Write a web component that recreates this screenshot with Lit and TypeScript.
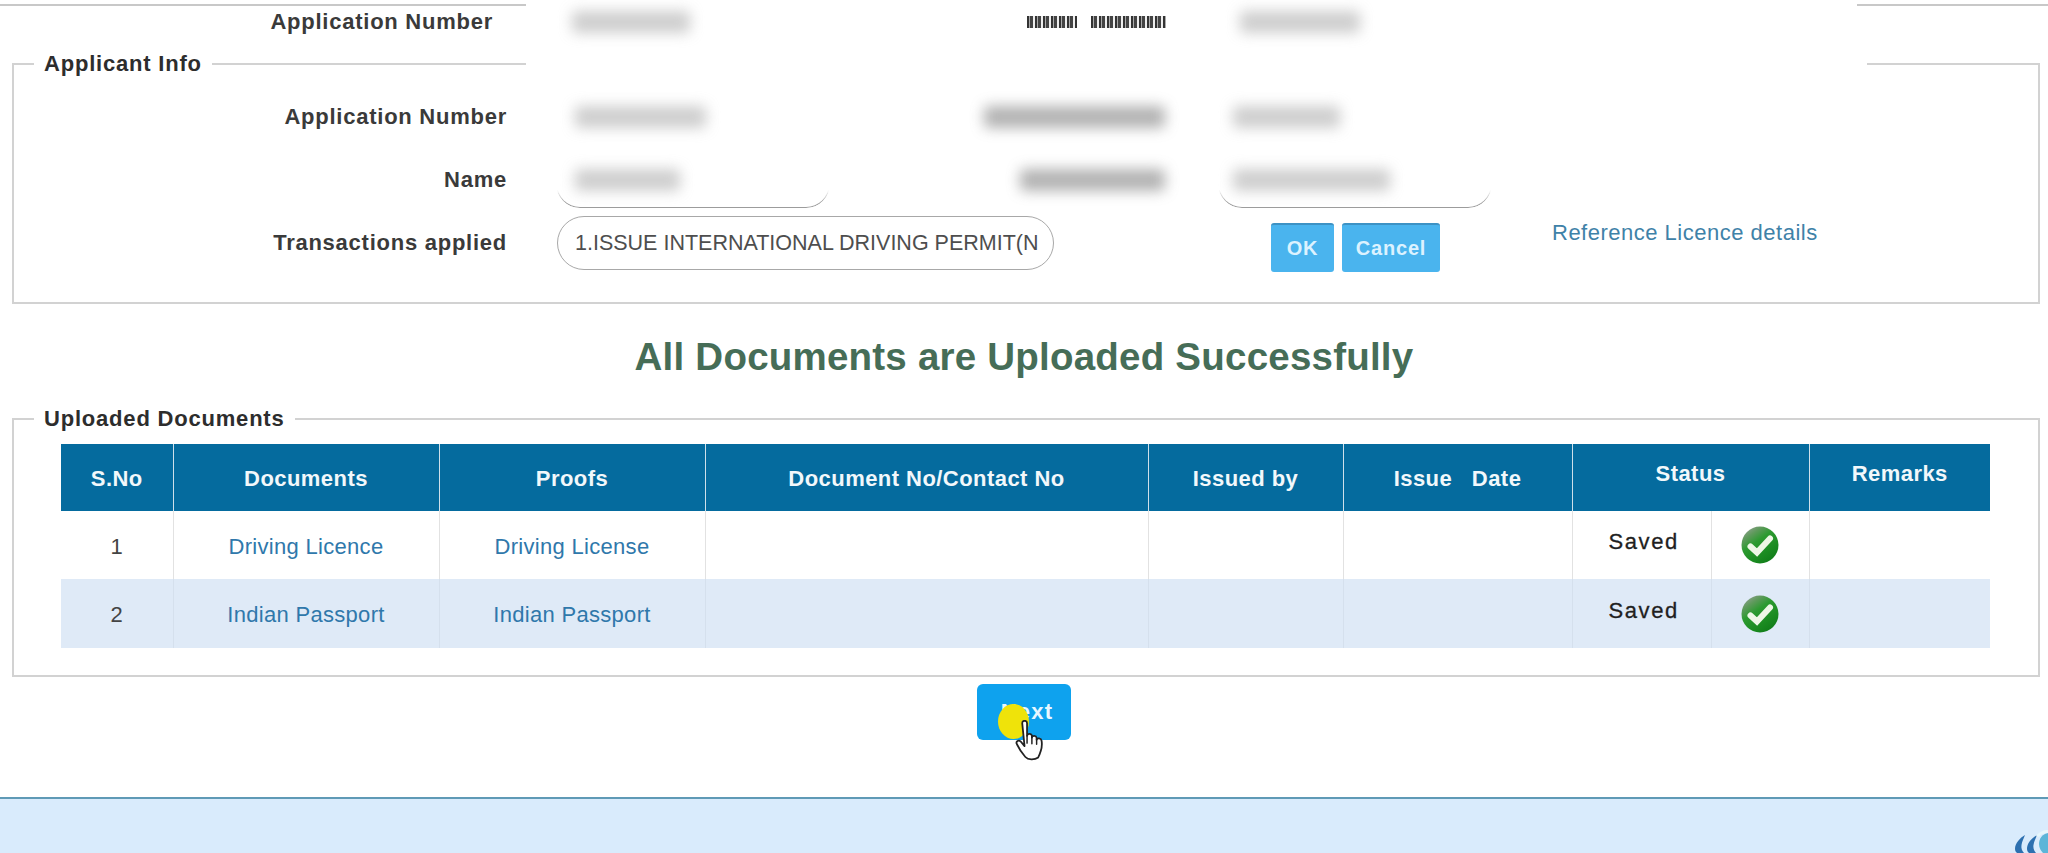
import { LitElement, html, css, svg } from "lit";
import { customElement } from "lit/decorators.js";

const checkIcon = html`<svg class="check" viewBox="0 0 38 38" width="38" height="38">
  <defs>
    <linearGradient id="g" x1="0.1" y1="0" x2="0.8" y2="1">
      <stop offset="0" stop-color="#9ba39b"/>
      <stop offset="0.22" stop-color="#5f9a5c"/>
      <stop offset="0.42" stop-color="#2c9a30"/>
      <stop offset="0.75" stop-color="#1a8a20"/>
      <stop offset="1" stop-color="#0f7a18"/>
    </linearGradient>
  </defs>
  <circle cx="19" cy="19" r="18.5" fill="url(#g)"/>
  <path d="M9.5 20.5 L16 26.5 L29 12.5" fill="none" stroke="#eef7e6" stroke-width="6" stroke-linecap="round" stroke-linejoin="miter"/>
</svg>`;

const hand = svg`<path d="M9.5 3c0-3 4.6-3 4.6 0v12c.4-2.4 4.2-2.4 4.6 0v1.8c.4-2.3 4.1-2.2 4.5.2v1.8c.5-2 4.3-1.8 4.7.8.6 3.6.2 7-.8 10-.7 2.4-1.5 4.4-2.4 6-3.6 2.6-9.6 2.4-12.2-.4-3.2-3.6-6.6-9-8.2-12.4-1.1-2.4 1.8-4.2 3.8-2.3l3.6 4.4Z" fill="#fff" stroke="#222" stroke-width="1.7" stroke-linejoin="round"/>
<path d="M14.1 15v7M18.7 16.5v6M23.2 18v5" stroke="#222" stroke-width="1.4" fill="none" stroke-linecap="round"/>`;

@customElement("app-root")
export class AppRoot extends LitElement {
  static styles = css`
    :host { display: block; width: 2048px; height: 853px; font-family: "Liberation Sans", Arial, sans-serif; color: #333; background: #fff; overflow: hidden; }
    .page { position: relative; width: 2048px; height: 853px; display: flex; flex-direction: column; overflow: hidden; }
    .topline { height: 2px; margin-top: 4px; background: #c8c8c8; flex: none; }
    .toprow { position: relative; z-index: 1; height: 43px; flex: none; display: grid; grid-template-columns: 493px 79px 455px 213px 1fr; align-items: center; padding-bottom: 12px; box-sizing: border-box; }
    .lab { text-align: right; font-weight: 700; font-size: 22px; letter-spacing: .75px; color: #3a3a3a; white-space: nowrap; }
    fieldset { margin: 0 8px 0 12px; border: 2px solid #d2d2d2; padding: 0; min-width: 0; flex: none; box-sizing: border-box; }
    legend { margin-left: 20px; padding: 0 10px; font-weight: 700; font-size: 22px; letter-spacing: .8px; line-height: 30px; color: #2d2d2d; }
    .form { display: grid; grid-template-columns: 493px 547px 111px 323px 1fr; grid-auto-rows: 63px; align-items: center; padding-top: 6px; padding-bottom: 28px; }
    .cell { display: flex; align-items: center; min-width: 0; height: 100%; }
    .end { justify-content: flex-end; }
    .pad { padding-left: 68px; }
    .rel { position: relative; }
    .blur { display: block; height: 22px; background: #b0b0b0; filter: blur(7px); border-radius: 4px; flex: none; opacity: .62; }
    .blur.dark { background: #8e8e8e; opacity: .68; }
    .w-top1 { width: 118px; }
    .w-top2 { width: 120px; }
    .w-a1 { width: 131px; }
    .w-a2 { width: 181px; }
    .w-a3 { width: 107px; }
    .w-n1 { width: 105px; }
    .w-n2 { width: 145px; }
    .w-n3 { width: 157px; }
    .curve { position: absolute; left: 49px; bottom: 3px; width: 274px; height: 30px; box-sizing: border-box; border: 1.5px solid #9c9c9c; border-top: 0; border-radius: 0 0 24px 24px; -webkit-mask: linear-gradient(to bottom, transparent 40%, #000 85%); mask: linear-gradient(to bottom, transparent 40%, #000 85%); }
    .curve.second { left: 53px; }
    .input { margin-left: 50px; width: 497px; height: 54px; box-sizing: border-box; border: 1.5px solid #a8a8a8; border-radius: 27px; padding: 0 2px 0 17px; font-size: 21.5px; color: #4e4e4e; line-height: 53px; overflow: hidden; white-space: nowrap; background: #fff; }
    .btns { grid-column: 3 / 5; display: flex; gap: 8px; padding: 9px 0 0 217px; }
    .btn { height: 49px; border-radius: 3px; background: #4ab4ee; border-top: 2px solid #3d92c4; box-sizing: border-box; color: #dcf2ff; font-weight: 700; font-size: 20px; letter-spacing: .8px; display: flex; align-items: center; justify-content: center; }
    .ok { width: 63px; }
    .cancel { width: 98px; }
    .ref { padding: 0 0 20px 64px; color: #3f82a8; font-size: 22px; letter-spacing: .5px; white-space: nowrap; }
    .headwrap { flex: none; height: 100px; padding-top: 6px; box-sizing: border-box; display: flex; align-items: center; justify-content: center; }
    h1 { margin: 0; font-size: 38.5px; letter-spacing: .22px; font-weight: 700; color: #466d57; }
    table { margin: 10px 0 27px 47px; width: 1929px; table-layout: fixed; border-collapse: collapse; font-size: 22px; }
    .c1 { width: 112px; } .c2 { width: 266px; } .c3 { width: 266px; } .c4 { width: 443px; } .c5 { width: 195px; } .c6 { width: 229px; } .c7 { width: 139px; } .c8 { width: 98px; } .c9 { width: 181px; }
    th { background: #056b9e; color: #f2f8fb; font-weight: 700; font-size: 22px; letter-spacing: .45px; height: 67px; padding: 2px 0 0; border-left: 1.5px solid #cfe0ea; border-right: 1.5px solid #cfe0ea; box-sizing: border-box; white-space: pre; }
    th:first-child { border-left: 0; } th:last-child { border-right: 0; }
    th.up { padding: 0 0 8px; }
    td { padding: 3px 0 0; text-align: center; border-left: 1.5px solid #e2e2e2; border-right: 1.5px solid #e2e2e2; letter-spacing: .3px; box-sizing: border-box; }
    td:first-child { border-left: 0; } td:last-child { border-right: 0; }
    tr.r1 td { height: 68px; background: #fff; }
    tr.r2 td { height: 69px; background: #dfeaf7; border-color: #d5e0ed; }
    .num { color: #444; }
    .link { color: #2f78ab; }
    td.saved { text-align: left; padding: 0 0 6px 36px; font-size: 22px; letter-spacing: 1.6px; color: #1f1f1f; -webkit-text-stroke: .3px #1f1f1f; }
    td.ic { text-align: left; padding: 0 0 0 29px; line-height: 0; }
    .check { display: inline-block; }
    .nextrow { flex: none; display: flex; justify-content: center; margin-top: 7px; }
    .next { position: relative; width: 94px; height: 56px; border-radius: 6px; background: #0ea2ee; color: #e8f7ff; font-weight: 700; font-size: 22px; letter-spacing: 1.2px; display: flex; align-items: center; justify-content: center; }
    .nx { margin-left: 6px; }
    .dot { position: absolute; left: 21px; top: 20px; width: 31px; height: 35px; border-radius: 50%; background: #efe30a; }
    .hand { position: absolute; left: 35px; top: 36px; }
    .footer { margin-top: 57px; flex: 1; background: #d9ebfc; border-top: 2px solid #5f9ab6; position: relative; }
    .logo { position: absolute; right: 0; bottom: 0; }
    .mask { position: absolute; background: #fff; }
    .m1 { left: 526px; top: 0; width: 820px; height: 70px; }
    .m2 { left: 1340px; top: 0; width: 517px; height: 30px; }
    .m3 { left: 1340px; top: 30px; width: 527px; height: 40px; }
    .stripes { display: flex; gap: 14px; height: 12px; filter: blur(.7px); }
    .st { display: block; height: 12px; background: repeating-linear-gradient(90deg, #333 0 2px, #aaa 2px 3px, #444 3px 6px, #eee 6px 8px); }
    .st1 { width: 50px; }
    .st2 { width: 75px; }
  `;

  render() {
    return html`<div class="page">
      <div class="mask m1"></div>
      <div class="mask m2"></div>
      <div class="mask m3"></div>
      <div class="topline"></div>
      <div class="toprow">
        <div class="lab">Application Number</div>
        <div></div>
        <div class="cell"><span class="blur w-top1"></span></div>
        <div class="cell"><span class="stripes"><span class="st st1"></span><span class="st st2"></span></span></div>
        <div class="cell"><span class="blur w-top2"></span></div>
      </div>
      <fieldset>
        <legend>Applicant Info</legend>
        <div class="form">
          <div class="lab">Application Number</div>
          <div class="cell pad"><span class="blur w-a1"></span></div>
          <div class="cell end"><span class="blur dark w-a2"></span></div>
          <div class="cell pad"><span class="blur w-a3"></span></div>
          <div></div>

          <div class="lab">Name</div>
          <div class="cell pad rel"><span class="blur w-n1"></span><span class="curve"></span></div>
          <div class="cell end"><span class="blur dark w-n2"></span></div>
          <div class="cell pad rel"><span class="blur w-n3"></span><span class="curve second"></span></div>
          <div></div>

          <div class="lab">Transactions applied</div>
          <div class="cell"><div class="input">1.ISSUE INTERNATIONAL DRIVING PERMIT(N</div></div>
          <div class="btns"><div class="btn ok">OK</div><div class="btn cancel">Cancel</div></div>
          <div class="ref">Reference Licence details</div>
        </div>
      </fieldset>
      <div class="headwrap"><h1>All Documents are Uploaded Successfully</h1></div>
      <fieldset>
        <legend>Uploaded Documents</legend>
        <table>
          <colgroup><col class="c1"/><col class="c2"/><col class="c3"/><col class="c4"/><col class="c5"/><col class="c6"/><col class="c7"/><col class="c8"/><col class="c9"/></colgroup>
          <thead><tr>
            <th>S.No</th><th>Documents</th><th>Proofs</th><th>Document No/Contact No</th><th>Issued by</th><th>Issue   Date</th>
            <th class="up" colspan="2">Status</th><th class="up">Remarks</th>
          </tr></thead>
          <tbody>
            <tr class="r1"><td class="num">1</td><td class="link">Driving Licence</td><td class="link">Driving License</td><td></td><td></td><td></td><td class="saved">Saved</td><td class="ic">${checkIcon}</td><td></td></tr>
            <tr class="r2"><td class="num">2</td><td class="link">Indian Passport</td><td class="link">Indian Passport</td><td></td><td></td><td></td><td class="saved">Saved</td><td class="ic">${checkIcon}</td><td></td></tr>
          </tbody>
        </table>
      </fieldset>
      <div class="nextrow">
        <div class="next"><span class="nx">Next</span>
          <span class="dot"></span>
          <svg class="hand" width="32" height="41" viewBox="0 0 30 39">${hand}</svg>
        </div>
      </div>
      <div class="footer">
        <svg class="logo" width="36" height="24" viewBox="0 0 36 24">
          <path d="M13 6 C8 9 3 14 3 20 C3 22 4 23 5 24 L12 24 C10 22 9 19 9.5 16 C10 12 12 9 13 6 Z" fill="#2d70b0"/>
          <path d="M25 6 C20 9 15 14 15 20 C15 22 16 23 17 24 L24 24 C22 22 21 19 21.5 16 C22 12 24 9 25 6 Z" fill="#2d70b0"/>
          <path d="M36 4 C30 5 27 10 27 15 C27 19 29 22 31 24 L36 24 Z" fill="#5db5d8"/>
          <path d="M24 7 C28 2 32 1 36 1 L36 4 C32 4 29 5 27 8 Z" fill="#e6f6fb"/>
        </svg>
      </div>
    </div>`;
  }
}
